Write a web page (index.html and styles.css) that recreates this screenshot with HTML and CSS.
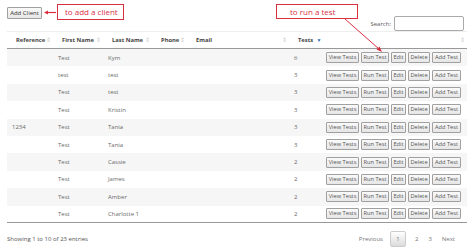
FILE: index.html
```html
<!DOCTYPE html>
<html>
<head>
<meta charset="utf-8">
<link rel="stylesheet" href="styles.css">
</head>
<body>
<div class="page">
  <div class="top">
    <button class="btn add-client">Add Client</button>
    <label class="search">Search: <input class="search-input" type="text"></label>
  </div>
  <table class="grid">
    <colgroup>
      <col class="c-ref"><col class="c-fn"><col class="c-ln"><col class="c-ph"><col class="c-em"><col class="c-ts"><col class="c-ac">
    </colgroup>
    <thead>
      <tr>
        <th><div class="thc"><span>Reference</span><span class="sort">&#8661;</span></div></th>
        <th><div class="thc"><span>First Name</span><span class="sort">&#8661;</span></div></th>
        <th><div class="thc"><span>Last Name</span><span class="sort">&#8661;</span></div></th>
        <th><div class="thc"><span>Phone</span><span class="sort">&#8661;</span></div></th>
        <th><div class="thc"><span>Email</span><span class="sort">&#8661;</span></div></th>
        <th><div class="thc"><span>Tests <span class="sort-active">&#9660;</span></span></div></th>
        <th class="th-act"><div class="thc"><span></span><span class="sort">&#8661;</span></div></th>
      </tr>
    </thead>
    <tbody>
      <tr><td></td><td>Test</td><td>Kym</td><td></td><td></td><td>6</td><td class="acts"><button class="btn b-view">View Tests</button><button class="btn b-run">Run Test</button><button class="btn b-edit">Edit</button><button class="btn b-del">Delete</button><button class="btn b-add">Add Test</button></td></tr>
      <tr><td></td><td>test</td><td>test</td><td></td><td></td><td>3</td><td class="acts"><button class="btn b-view">View Tests</button><button class="btn b-run">Run Test</button><button class="btn b-edit">Edit</button><button class="btn b-del">Delete</button><button class="btn b-add">Add Test</button></td></tr>
      <tr><td></td><td>Test</td><td>test</td><td></td><td></td><td>3</td><td class="acts"><button class="btn b-view">View Tests</button><button class="btn b-run">Run Test</button><button class="btn b-edit">Edit</button><button class="btn b-del">Delete</button><button class="btn b-add">Add Test</button></td></tr>
      <tr><td></td><td>Test</td><td>Kristin</td><td></td><td></td><td>3</td><td class="acts"><button class="btn b-view">View Tests</button><button class="btn b-run">Run Test</button><button class="btn b-edit">Edit</button><button class="btn b-del">Delete</button><button class="btn b-add">Add Test</button></td></tr>
      <tr><td>1234</td><td>Test</td><td>Tania</td><td></td><td></td><td>3</td><td class="acts"><button class="btn b-view">View Tests</button><button class="btn b-run">Run Test</button><button class="btn b-edit">Edit</button><button class="btn b-del">Delete</button><button class="btn b-add">Add Test</button></td></tr>
      <tr><td></td><td>Test</td><td>Tania</td><td></td><td></td><td>3</td><td class="acts"><button class="btn b-view">View Tests</button><button class="btn b-run">Run Test</button><button class="btn b-edit">Edit</button><button class="btn b-del">Delete</button><button class="btn b-add">Add Test</button></td></tr>
      <tr><td></td><td>Test</td><td>Cassie</td><td></td><td></td><td>2</td><td class="acts"><button class="btn b-view">View Tests</button><button class="btn b-run">Run Test</button><button class="btn b-edit">Edit</button><button class="btn b-del">Delete</button><button class="btn b-add">Add Test</button></td></tr>
      <tr><td></td><td>Test</td><td>James</td><td></td><td></td><td>2</td><td class="acts"><button class="btn b-view">View Tests</button><button class="btn b-run">Run Test</button><button class="btn b-edit">Edit</button><button class="btn b-del">Delete</button><button class="btn b-add">Add Test</button></td></tr>
      <tr><td></td><td>Test</td><td>Amber</td><td></td><td></td><td>2</td><td class="acts"><button class="btn b-view">View Tests</button><button class="btn b-run">Run Test</button><button class="btn b-edit">Edit</button><button class="btn b-del">Delete</button><button class="btn b-add">Add Test</button></td></tr>
      <tr><td></td><td>Test</td><td>Charlotte 1</td><td></td><td></td><td>2</td><td class="acts"><button class="btn b-view">View Tests</button><button class="btn b-run">Run Test</button><button class="btn b-edit">Edit</button><button class="btn b-del">Delete</button><button class="btn b-add">Add Test</button></td></tr>
    </tbody>
  </table>
  <div class="footer">
    <div class="info">Showing 1 to 10 of 23 entries</div>
    <div class="pager">
      <span class="pg">Previous</span>
      <span class="pg current">1</span>
      <span class="pg">2</span>
      <span class="pg">3</span>
      <span class="pg">Next</span>
    </div>
  </div>

  <div class="note note-add">to add a client</div>
  <div class="note note-run">to run a test</div>
  <svg class="arrows" width="474" height="249" viewBox="0 0 474 249">
    <line x1="56" y1="12.5" x2="47" y2="12.5" stroke="#d8303f" stroke-width="1.2"/>
    <polygon points="44,12.5 48,10.5 48,14.5" fill="#d8303f"/>
    <line x1="345" y1="19" x2="379" y2="49" stroke="#d8303f" stroke-width="1"/>
    <polygon points="382,52 376.5,49.5 379.5,46.5" fill="#d8303f"/>
  </svg>
</div>
</body>
</html>
```
FILE: styles.css
```css
* { box-sizing: border-box; }
html, body { margin: 0; padding: 0; background: #fff; }
body {
  width: 474px;
  height: 249px;
  overflow: hidden;
  font-family: "Open Sans", "Liberation Sans", sans-serif;
  font-size: 6px;
  color: #555;
}
.page {
  position: relative;
  padding: 0 7px;
  width: 474px;
  height: 249px;
}
.top {
  display: flex;
  justify-content: space-between;
  height: 31px;
}
.btn {
  font-family: "Open Sans", "Liberation Sans", sans-serif;
  font-size: 5.7px;
  color: #555;
  background: linear-gradient(#fafafa, #e6e6e6);
  border: 1px solid #a0a0a0;
  border-radius: 1px;
  padding: 0;
  height: 11px;
  line-height: 9px;
  margin: 0;
  text-align: center;
  white-space: nowrap;
  overflow: hidden;
}
.add-client {
  margin-top: 7px;
  height: 12px;
  width: 35px;
  color: #333;
  font-size: 6px;
}
.search {
  align-self: flex-end;
  display: flex;
  align-items: center;
  gap: 3px;
  margin-right: 3px;
  color: #555;
  font-size: 6px;
}
.search-input {
  width: 70px;
  height: 15px;
  border: 1px solid #aaa;
  border-radius: 2px;
  margin: 0;
  padding: 0;
}
.grid {
  width: 460px;
  border-collapse: collapse;
  table-layout: fixed;
}
.c-ref { width: 46px; }
.c-fn { width: 50px; }
.c-ln { width: 49px; }
.c-ph { width: 35px; }
.c-em { width: 102px; }
.c-ts { width: 32px; }
.c-ac { width: 146px; }
.grid thead th {
  height: 17px;
  padding: 0 2px 0 9px;
  text-align: left;
  font-weight: 700;
  color: #444;
  font-size: 5.8px;
  border-top: 1px solid #eee;
  border-bottom: 1px solid #999;
  white-space: nowrap;
}
.thc {
  display: flex;
  justify-content: space-between;
  align-items: center;
}
.sort {
  color: #ccc;
  font-weight: 400;
  font-size: 6px;
}
.sort-active {
  color: #2a6ebb;
  font-size: 5px;
  font-weight: 400;
  margin-left: 2px;
}
.th-act { padding-right: 4px; }
.grid tbody td {
  height: 17.4px;
  padding: 0 0 0 5px;
  white-space: nowrap;
  color: #6a6a6a;
  font-size: 6px;
}
.grid tbody tr:nth-child(odd) { background: #f6f6f6; }
.grid tbody tr:last-child td { border-bottom: 1px solid #999; }
.acts {
  display: flex;
  align-items: center;
  gap: 2px;
  height: 17.4px;
}
.b-view { width: 33px; }
.b-run { width: 28px; }
.b-edit { width: 15px; }
.b-del { width: 22px; }
.b-add { width: 29px; }
.footer {
  display: flex;
  justify-content: space-between;
  align-items: center;
  margin-top: 7px;
  height: 17px;
}
.info { color: #555; font-size: 6px; }
.pager {
  display: flex;
  align-items: center;
  margin-right: 7px;
}
.pg {
  color: #777;
  font-size: 6px;
  padding: 0 5px;
  height: 16px;
  line-height: 16px;
}
.pg.current {
  border: 1px solid #ccc;
  border-radius: 2px;
  background: linear-gradient(#fff, #dcdcdc);
  width: 16px;
  padding: 0;
  text-align: center;
  line-height: 14px;
  margin: 0 4px 0 2px;
}
.note {
  position: absolute;
  border: 1px solid #d8303f;
  color: #d8303f;
  background: #fff;
  font-family: "Open Sans", "Liberation Sans", sans-serif;
  font-size: 8px;
  line-height: 14px;
  padding: 0 0 0 7px;
  white-space: nowrap;
}
.note-add { left: 57px; top: 4px; width: 67px; height: 16px; }
.note-run { left: 276px; top: 4px; width: 82px; height: 15px; line-height: 13px; padding-left: 13px; }
.arrows {
  position: absolute;
  left: 0;
  top: 0;
  pointer-events: none;
}
```
